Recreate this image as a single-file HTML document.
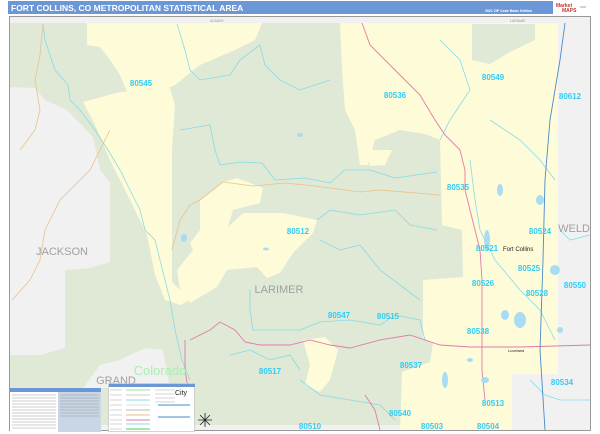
<!DOCTYPE html>
<html><head><meta charset="utf-8"><style>
html,body{margin:0;padding:0;background:#fff;width:600px;height:434px;overflow:hidden}
svg{display:block}
text{font-family:"Liberation Sans",sans-serif}
.z{fill:#33ccf5;font-weight:bold;font-size:8px;text-anchor:middle}
.c{fill:#a0a0a0;font-size:11px;text-anchor:middle}
</style></head><body>
<svg width="600" height="434" viewBox="0 0 600 434">
<rect x="8" y="1" width="545" height="13" fill="#6b97d6"/>
<text x="11" y="11" fill="#fff" font-size="8.5" font-weight="bold">FORT COLLINS, CO METROPOLITAN STATISTICAL AREA</text>
<text x="485" y="12" fill="#fff" font-size="3.5" font-weight="bold">2021 ZIP Code Basic Edition</text>
<rect x="553" y="1" width="40" height="13" fill="#fff"/>
<text x="556" y="7" fill="#c0392b" font-size="5" font-weight="bold">Market</text>
<text x="562" y="12" fill="#c0392b" font-size="5" font-weight="bold">MAPS</text>
<text x="580" y="8" fill="#888" font-size="3">MAP</text>
<rect x="9.5" y="16.5" width="581" height="414" fill="#dfe9d5" stroke="#999"/>
<rect x="10" y="17" width="580" height="6" fill="#f1f1f1"/>
<text x="210" y="22" fill="#999" font-size="3.5">ALBANY</text>
<text x="510" y="22" fill="#999" font-size="3.5">LARAMIE</text>
<polygon fill="#f1f1f1" points="10,87 35,88 45,100 67,110 93,137 100,170 110,182 110,262 90,268 65,270 65,348 40,355 10,355"/>
<polygon fill="#f1f1f1" points="83,388 100,365 120,360 145,348 163,350 170,388"/>
<polygon fill="#f1f1f1" points="558,23 590,23 590,430 512,430 512,374 558,374"/>
<rect x="10" y="425" width="580" height="5" fill="#f1f1f1"/>
<polygon fill="#fefbd9" points="87,23 262,23 255,40 235,50 200,65 175,85 160,92 127,92 120,75 110,60 100,47 87,45"/>
<polygon fill="#fefbd9" points="83,102 120,92 170,88 175,105 172,150 172,282 190,300 180,305 165,300 155,275 147,235 130,200 110,160 95,125"/>
<polygon fill="#fefbd9" points="340,23 558,23 558,374 512,374 512,430 400,430 402,372 430,362 433,343 423,338 423,280 463,277 462,230 442,225 440,140 425,134 400,130 375,140 368,165 360,165 355,130 345,110 342,70"/>
<polygon fill="#fefbd9" points="367,150 392,150 385,165 370,166"/>
<polygon fill="#dfe9d5" points="472,24 535,24 535,40 510,52 490,64 472,60"/>
<polygon fill="#fefbd9" points="200,200 223,182 237,178 263,188 260,203 233,210 228,227 243,213 283,213 317,220 313,233 293,253 280,273 267,278 257,267 227,270 217,287 190,303 180,290 177,270 193,250 190,243 200,230 200,210"/>
<polygon fill="#fefbd9" points="303,340 325,337 338,350 330,380 320,392 305,385 310,365"/>
<g fill="none" stroke="#86dbe8" stroke-width="0.8">
<path d="M43,24 L45,40 L55,70 L68,85 L70,100 L80,110 L95,130 L108,150 L120,170 L130,190 L140,210 L145,230 L155,240 L160,260 L165,280 L170,300 L175,330 L182,360 L190,380"/>
<path d="M177,24 L185,50 L190,70 L200,80 L230,75 L240,60 L260,45 L265,65 L280,80 L300,90 L330,80"/>
<path d="M180,130 L210,125 L215,150 L220,165 L240,162 L262,163 L275,180 L305,178 L330,183 L345,170 L370,170 L395,178 L437,172"/>
<path d="M317,220 L330,210 L360,215 L395,210 L410,225 L437,230"/>
<path d="M250,290 L250,310 L253,330 L300,330 L320,322 L350,320 L380,325 L395,315 L420,320 L425,340"/>
<path d="M320,240 L340,250 L360,245 L380,270 L400,285 L420,300"/>
<path d="M300,380 L320,395 L350,400 L380,405 L395,420"/>
<path d="M440,40 L460,60 L470,90 L450,120 L440,140"/>
<path d="M490,120 L520,140 L540,160 L555,180"/>
<path d="M560,230 L570,240 L590,235"/>
<path d="M530,380 L545,395 L560,400 L590,400"/>
<path d="M230,355 L250,350 L270,360 L290,355 L300,370"/>
<path d="M470,160 L475,200 L480,230 L495,260 L520,290 L540,310 L555,340"/>
</g>
<path d="M12,300 L30,280 L40,260 L45,230 L60,200 L90,170 L100,150 L110,130 M172,250 L180,220 L190,205 L200,200 L223,182 L253,186 L285,183 L315,186 L345,190 L360,192 L380,190 L440,195" fill="none" stroke="#e8c28a" stroke-width="0.8"/>
<path d="M20,150 L35,130 L40,110 L35,80 L40,55 L43,25" fill="none" stroke="#e8c28a" stroke-width="0.8"/>
<g fill="none" stroke="#e27aa8" stroke-width="0.9">
<path d="M362,23 L370,45 L395,70 L420,95 L435,120 L445,135 L460,150 L465,170 L465,190 L470,210 L475,230 L480,250 L482,280 L482,330 L482,370 L485,400"/>
<path d="M190,340 L210,330 L220,322 L235,330 L245,342 L260,345 L290,345 L310,340 L330,345 L350,348 L380,340 L410,335 L440,345 L470,347 L520,347 L590,345"/>
<path d="M185,340 L185,370 L190,400"/>
<path d="M365,395 L375,410 L380,430"/>
</g>
<path d="M565,23 L560,60 L550,120 L545,180 L543,260 L540,350 L545,430" fill="none" stroke="#4a8ac8" stroke-width="0.9"/>
<g fill="#a8dcf2">
<ellipse cx="487" cy="240" rx="3" ry="10"/><ellipse cx="520" cy="320" rx="6" ry="8"/><ellipse cx="505" cy="315" rx="4" ry="5"/>
<ellipse cx="500" cy="190" rx="3" ry="6"/><ellipse cx="540" cy="200" rx="4" ry="5"/><ellipse cx="445" cy="380" rx="3" ry="8"/>
<ellipse cx="555" cy="270" rx="5" ry="5"/><ellipse cx="266" cy="249" rx="3" ry="1.5"/><ellipse cx="300" cy="135" rx="3" ry="2"/>
<ellipse cx="470" cy="360" rx="3" ry="2"/><ellipse cx="485" cy="380" rx="4" ry="3"/><ellipse cx="560" cy="330" rx="3" ry="3"/>
<ellipse cx="184" cy="238" rx="3" ry="4"/>
</g>
<text class="z" x="141" y="86">80545</text><text class="z" x="395" y="98">80536</text>
<text class="z" x="493" y="80">80549</text><text class="z" x="570" y="99">80612</text>
<text class="z" x="458" y="190" font-size="6">80535</text><text class="z" x="298" y="234">80512</text>
<text class="z" x="540" y="234">80524</text><text class="z" x="487" y="251">80521</text>
<text x="503" y="251" font-size="6" fill="#222">Fort Collins</text>
<text class="z" x="529" y="271">80525</text><text class="z" x="575" y="288">80550</text>
<text class="z" x="483" y="286">80526</text><text class="z" x="537" y="296">80528</text>
<text class="z" x="339" y="318" font-size="6">80547</text><text class="z" x="388" y="319">80515</text>
<text class="z" x="478" y="334">80538</text><text x="508" y="352" font-size="4" fill="#222">Loveland</text>
<text class="z" x="411" y="368">80537</text><text class="z" x="270" y="374">80517</text>
<text class="z" x="562" y="385">80534</text><text class="z" x="493" y="406">80513</text>
<text class="z" x="400" y="416">80540</text><text class="z" x="432" y="429">80503</text>
<text class="z" x="488" y="429" font-size="6">80504</text><text class="z" x="310" y="429" font-size="6">80510</text>
<text class="c" x="62" y="255">JACKSON</text><text class="c" x="279" y="293">LARIMER</text>
<text class="c" x="574" y="232">WELD</text><text class="c" x="116" y="384">GRAND</text>
<text x="160" y="375" fill="#a8f0b0" font-size="13" text-anchor="middle">Colorado</text>
<rect x="10" y="388" width="91" height="44" fill="#fff"/>
<rect x="10" y="388" width="91" height="4" fill="#6b97d6"/>
<rect x="58" y="392" width="43" height="40" fill="#c9d6e6"/>
<g stroke="#999" stroke-width="0.6">
<path d="M12,395h44M12,398h44M12,401h44M12,404h44M12,407h44M12,410h44M12,413h44M12,416h44M12,419h44M12,422h44M12,425h44M12,428h44"/>
<path d="M60,395h39M60,398h39M60,401h39M60,404h39M60,407h39M60,410h39M60,413h39M60,416h39"/>
</g>
<rect x="108.5" y="383.5" width="86" height="48" fill="#fff" stroke="#aaa" stroke-width="0.5"/>
<rect x="109" y="384" width="86" height="3" fill="#6b97d6"/>
<g stroke-width="1" fill="none">
<path d="M126,390h24" stroke="#9ee6a0"/><path d="M126,395h24" stroke="#ccc"/><path d="M126,400h24" stroke="#86dbe8"/>
<path d="M126,405h24" stroke="#ddd"/><path d="M126,410h24" stroke="#bbb"/><path d="M126,415h24" stroke="#e8c28a"/>
<path d="M126,420h24" stroke="#e27aa8"/><path d="M126,424h24" stroke="#86dbe8"/><path d="M126,429h24" stroke="#5c5"/>
<path d="M158,405h32M158,417h32" stroke="#4a8ac8"/>
</g>
<g stroke="#aaa" stroke-width="0.5"><path d="M110,390h12M110,395h12M110,400h12M110,405h12M110,410h12M110,415h12M110,420h12M110,424h12M110,429h12M155,390h20M155,394h20M155,398h20M155,402h20"/></g>
<text x="175" y="395" font-size="7" fill="#222">City</text>
<g stroke="#222" stroke-width="0.8"><path d="M205,413v14M198,420h14M200,415l10,10M210,415l-10,10"/></g>
</svg>
</body></html>
